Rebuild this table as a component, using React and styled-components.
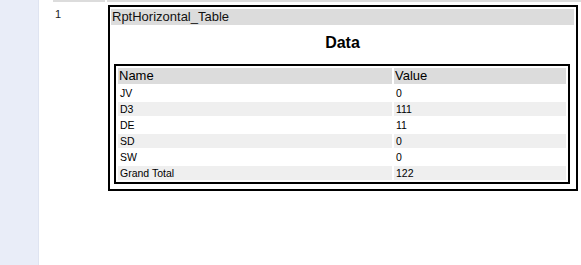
import styled, { createGlobalStyle } from "styled-components";

const GlobalStyle = createGlobalStyle`
    html, body {
        margin: 0;
        padding: 0;
        background: #fff;
    }
    body {
        font-family: "Liberation Sans", Arial, sans-serif;
        color: #000;
    }
`;

const Page = styled.div`
    display: flex;
    width: 581px;
    height: 265px;
    overflow: hidden;
`;

const Sidebar = styled.div`
    width: 38px;
    flex-shrink: 0;
    background: #e9edf8;
    border-right: 1px solid #dfe4f1;
`;

const Main = styled.div`
    flex: 1;
    display: flex;
    flex-direction: column;
    padding-left: 1px;
`;

const HeaderStrip = styled.div`
    display: flex;
    height: 2px;
    gap: 2px;
    padding-left: 13px;
`;

const StripCell = styled.div`
    background: #dcdcdc;
    ${props => props.grow ? `flex: 1;` : `width: ${props.width}px;`}
`;

const BodyRow = styled.div`
    display: flex;
`;

const RowNumber = styled.div`
    width: 53px;
    flex-shrink: 0;
    padding: 6px 0 0 15px;
    font-size: 11px;
    line-height: 13px;
    color: #222;
`;

const ReportBox = styled.div`
    box-sizing: border-box;
    width: 470px;
    margin: 3px 0 0 0;
    border: 2px solid #000;
    padding: 2px 2px 5px 1px;
`;

const ReportTitle = styled.div`
    background: #dcdcdc;
    height: 16px;
    font-size: 13px;
    line-height: 16px;
    padding-left: 1px;
    color: #111;
`;

const Heading = styled.div`
    margin: 8px 0 11px;
    text-align: center;
    font-size: 16px;
    line-height: 20px;
    font-weight: bold;
`;

const DataTable = styled.table`
    margin-left: 3px;
    width: 456px;
    border: 2px solid #000;
    border-spacing: 2px;
    border-collapse: separate;
`;

const HeadCell = styled.th`
    background: #dcdcdc;
    height: 16px;
    padding: 0 0 0 1px;
    font-size: 13px;
    line-height: 16px;
    font-weight: normal;
    text-align: left;
    width: ${props => props.width}px;
`;

const Cell = styled.td`
    background: ${props => props.shaded ? "#efefef" : "#fff"};
    height: 14px;
    padding: 0 0 0 2px;
    font-size: 10.5px;
    line-height: 14px;
`;

const rows = [
    { name: "JV", value: "0" },
    { name: "D3", value: "111" },
    { name: "DE", value: "11" },
    { name: "SD", value: "0" },
    { name: "SW", value: "0" },
    { name: "Grand Total", value: "122" },
];

export default function App() {
    return (
        <>
            <GlobalStyle />
            <Page>
                <Sidebar />
                <Main>
                    <HeaderStrip>
                        <StripCell width={52} />
                        <StripCell grow />
                    </HeaderStrip>
                    <BodyRow>
                        <RowNumber>1</RowNumber>
                        <ReportBox>
                            <ReportTitle>RptHorizontal_Table</ReportTitle>
                            <Heading>Data</Heading>
                            <DataTable>
                                <thead>
                                    <tr>
                                        <HeadCell width={273}>Name</HeadCell>
                                        <HeadCell width={171}>Value</HeadCell>
                                    </tr>
                                </thead>
                                <tbody>
                                    {rows.map((row, i) => (
                                        <tr key={row.name}>
                                            <Cell shaded={i % 2 === 1}>{row.name}</Cell>
                                            <Cell shaded={i % 2 === 1}>{row.value}</Cell>
                                        </tr>
                                    ))}
                                </tbody>
                            </DataTable>
                        </ReportBox>
                    </BodyRow>
                </Main>
            </Page>
        </>
    );
}
